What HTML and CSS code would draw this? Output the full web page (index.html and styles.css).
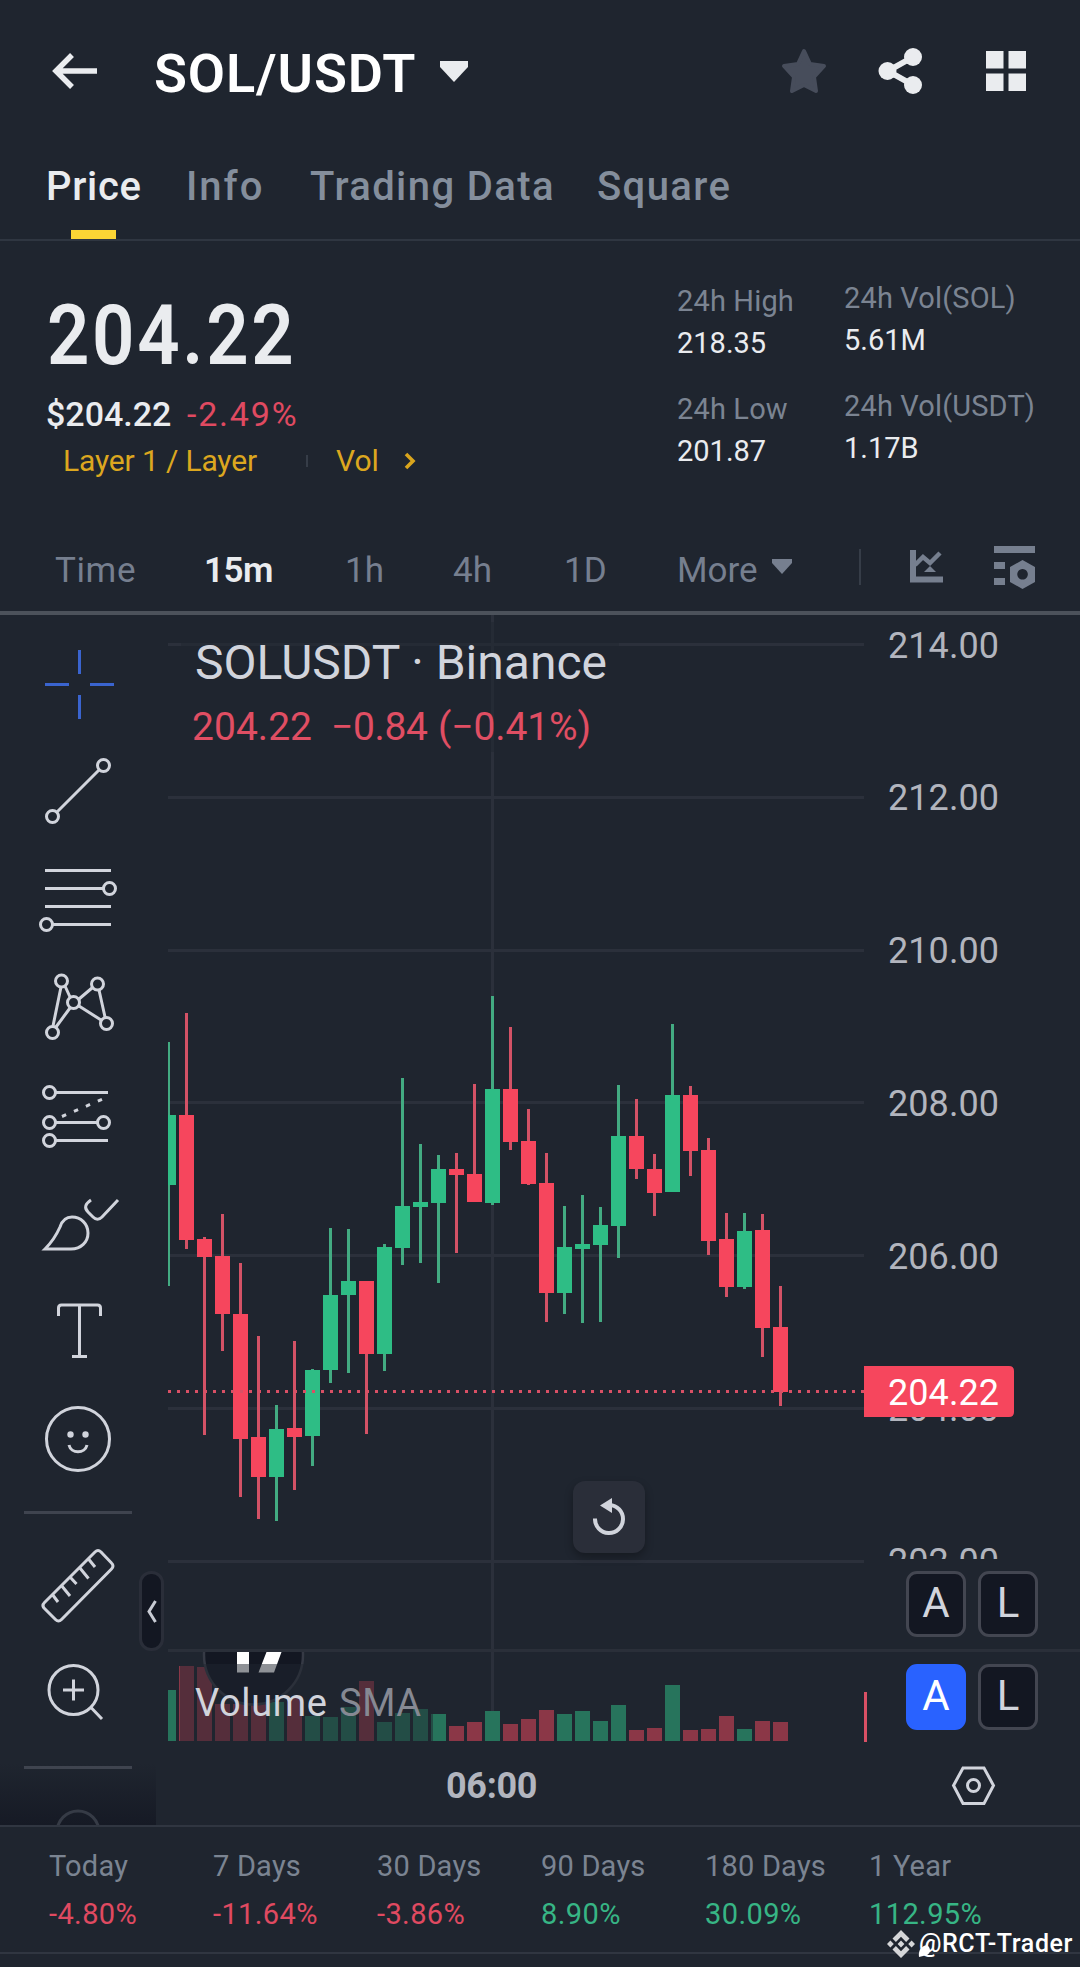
FILE: index.html
```html
<!DOCTYPE html>
<html lang="en">
<head>
    <meta charset="UTF-8">
    <meta name="viewport" content="width=device-width, initial-scale=1.0">
    <title>SOL/USDT</title>
    <link rel="stylesheet" href="styles.css">
</head>
<body>
    <header class="header">
        <svg class="back" width="48" height="40" viewBox="0 0 48 40"><path d="M46 20H6M21 4L5 20l16 16" fill="none" stroke="#eaecef" stroke-width="5.5"/></svg>
        <h1>SOL/USDT</h1>
        <svg class="caret" width="28" height="21" viewBox="0 0 28 21"><path d="M0 0h28v6L14 21 0 6z" fill="#eaecef"/></svg>
        <div class="actions">
            <svg width="46" height="46" viewBox="0 0 46 46"><path d="M23 3l6 13 14 2-10 11 2 14-12-6-12 6 2-14L3 18l14-2z" fill="#474d5b" stroke="#474d5b" stroke-width="4" stroke-linejoin="round"/></svg>
            <svg width="44" height="46" viewBox="0 0 44 46"><path d="M35 9L10 23l25 14" fill="none" stroke="#eaecef" stroke-width="6"/><g fill="#eaecef"><circle cx="35" cy="9" r="9"/><circle cx="9.500" cy="23" r="9"/><circle cx="35" cy="37" r="9"/></g></svg>
            <svg width="40" height="40" viewBox="0 0 40 40"><path d="M0 0h17.500v17.500H0zM22.500 0H40v17.500H22.500zM0 22.500h17.500V40H0zM22.500 22.500H40V40H22.500z" fill="#eaecef"/></svg>
        </div>
    </header>

    <nav class="tabs">
        <a class="tab active">Price</a>
        <a class="tab tab-info">Info</a>
        <a class="tab tab-trading">Trading Data</a>
        <a class="tab">Square</a>
    </nav>

    <section class="quote">
        <div class="quote-main">
            <div class="last-price">204.22</div>
            <div class="sub-price"><span class="fiat">$204.22</span><span class="change down">-2.49%</span></div>
            <div class="tags">
                <span class="tag-layer">Layer 1 / Layer</span>
                <span class="tag-divider"></span>
                <span>Vol</span>
                <svg width="12" height="18" viewBox="0 0 12 18"><path d="M2 2l7 7-7 7" fill="none" stroke="#d9a51d" stroke-width="3.600"/></svg>
            </div>
        </div>
        <div class="stats high-low">
            <div class="label">24h High</div>
            <div class="value">218.35</div>
            <div class="label second">24h Low</div>
            <div class="value">201.87</div>
        </div>
        <div class="stats volumes">
            <div class="label">24h Vol(SOL)</div>
            <div class="value">5.61M</div>
            <div class="label second">24h Vol(USDT)</div>
            <div class="value">1.17B</div>
        </div>
    </section>

    <nav class="intervals">
        <span class="iv-time">Time</span>
        <span class="iv-15 active">15m</span>
        <span class="iv-1h">1h</span>
        <span class="iv-4h">4h</span>
        <span class="iv-1d">1D</span>
        <span class="iv-more">More</span>
        <svg class="iv-caret" width="20" height="15" viewBox="0 0 20 15"><path d="M0 0h20v4L10 15 0 4z" fill="#767f8f"/></svg>
        <i class="iv-divider"></i>
        <svg class="iv-chart" width="33" height="33" viewBox="0 0 33 33"><path d="M3 0v29.500h30" fill="none" stroke="#767f8f" stroke-width="6"/><path d="M5 15l8-8 7 6L30 3" fill="none" stroke="#767f8f" stroke-width="4.500"/><path d="M14 22l6-6 6 6z" fill="#767f8f"/></svg>
        <svg class="iv-settings" width="41" height="43" viewBox="0 0 41 43"><path d="M0 0h41v7H0zM0 16h11v7H0zM0 32h11v7H0z" fill="#767f8f"/><path fill-rule="evenodd" d="M28.500 14L41 21v15l-12.500 7L16 36V21zM28.500 23a5.300 5.300 0 1 0 .1 0z" fill="#767f8f"/></svg>
    </nav>

    <main class="chart">
        <aside class="tools">
            <svg class="tool cross" viewBox="0 0 156 108"><path d="M79.500 20v24M79.500 65v24M45 54.500h24M90 54.500h24"/></svg>
            <svg class="tool" viewBox="0 0 156 108"><path d="M57 74l42-42"/><circle cx="103.500" cy="27.500" r="6"/><circle cx="52.500" cy="78.500" r="6"/></svg>
            <svg class="tool" viewBox="0 0 156 108"><path d="M45 24.500h66M45 42.500h58M45 60.500h66M53 78.500h58"/><circle cx="109.500" cy="42.500" r="6"/><circle cx="46.500" cy="78.500" r="6"/></svg>
            <svg class="tool" viewBox="0 0 156 108"><path d="M61 33l-8 39M65 32l5 11M56 73l14-19M79 45l13-11M99 36l6 27M79 52l22 14"/><circle cx="61.500" cy="27" r="6"/><circle cx="97.500" cy="30" r="6"/><circle cx="73.500" cy="48.500" r="6"/><circle cx="52.500" cy="78.500" r="6"/><circle cx="106.500" cy="69.500" r="6"/></svg>
            <svg class="tool" viewBox="0 0 156 108"><path d="M56 30.500h52M56 60.500h41M56 78.500h52"/><path d="M62 54.500l42-18" stroke-dasharray="4.500 8.500"/><circle cx="49.500" cy="30.500" r="6"/><circle cx="49.500" cy="60.500" r="6"/><circle cx="103.500" cy="60.500" r="6"/><circle cx="49.500" cy="78.500" r="6"/></svg>
            <svg class="tool" viewBox="0 0 156 108"><path d="M45 79c8-8 11-13 15-22 2-6 6-10 12-10 9 0 16 7 16 16s-7 16-17 16z"/><path d="M91 30c-6 4-7 8-3 12l5 5c3 3 6 3 9 0l16-17"/></svg>
            <svg class="tool" viewBox="0 0 156 108"><path d="M58.500 38v-8q0-3 3-3h36q3 0 3 3v8M79.500 27v51M72 78.500h15"/></svg>
            <svg class="tool" viewBox="0 0 156 108"><circle cx="78" cy="53" r="31.500"/><path d="M69 59c2 9 16 9 18 0"/><g class="solid"><circle cx="70.500" cy="48.500" r="3.200"/><circle cx="85.500" cy="48.500" r="3.200"/></g></svg>
            <hr>
            <svg class="tool ruler" viewBox="0 0 156 108"><path d="M95 20q3-3 6 0l10.500 11q3 3 0 6L61.500 87.500q-3 3-6 0L44.500 76.500q-3-3 0-6z"/><path d="M52 62l6 8M61 53l9 11M70 45l6.500 7M79.500 35.500l9 11M88.500 27l6.500 8"/></svg>
            <svg class="tool" viewBox="0 0 156 108"><circle cx="73.500" cy="50" r="24.500"/><path d="M63 50h21M73.500 39.500v21M91 67.500l11 11.500"/></svg>
            <div class="tools-fade">
                <hr>
                <svg class="magnet" viewBox="0 0 156 40"><path d="M57 45a21 21 0 0 1 42 0"/></svg>
            </div>
            <button class="collapse"><svg width="10" height="23" viewBox="0 0 10 23"><path d="M8.500 1L2 11.500 8.500 22" fill="none" stroke="#c8cbd4" stroke-width="3"/></svg></button>
        </aside>

        <svg class="plot" id="plot" width="912" height="1210" viewBox="168 615 912 1210">
            <g id="grid" class="grid"></g>
            <rect x="181" y="622" width="438" height="130" class="veil"/>
            <g id="candles"></g>
            <path d="M168 1391.500h696" stroke="#d95065" stroke-width="3" stroke-dasharray="3 6"/>
            <rect x="168" y="1649" width="912" height="3" fill="#2a2f39"/>

            <text class="title" x="195" y="679" textLength="412">SOLUSDT · Binance</text>
            <text class="ohlc" x="192" y="740" textLength="120">204.22</text>
            <text class="ohlc" x="331" y="740" textLength="97">−0.84</text>
            <text class="ohlc" x="438" y="740" textLength="153">(−0.41%)</text>

            <svg x="864" y="615" width="216" height="944" viewBox="864 615 216 944">
                <g id="axis" class="axis"></g>
            </svg>
            <path d="M864 1366h145q5 0 5 5v41q0 5-5 5H864z" fill="#f6465d"/>
            <text class="axis current" x="888" y="1404.500" textLength="111">204.22</text>

            <g id="volume"></g>
            <svg x="190" y="1652" width="130" height="60" viewBox="190 1652 130 60">
                <circle cx="253.500" cy="1655" r="49.500" fill="#131722" stroke="#363a45" stroke-width="2.500"/>
                <path d="M237 1652h12v20.500h-12zM266.500 1652h15l-7.500 20.500h-15.500z" fill="#fff"/>
            </svg>
            <rect x="180" y="1664" width="253" height="78" class="veil"/>
            <text class="vol" x="195" y="1716" textLength="132">Volume</text>
            <text class="vol dim" x="339" y="1716" textLength="82">SMA</text>
            <rect x="864" y="1692" width="3" height="50" fill="#d95065"/>

            <text class="time" x="446" y="1798" textLength="91.500">06:00</text>
            <path d="M963 1768h21l9.500 17.500-9.500 18h-21l-9.500-18z" fill="none" stroke="#d1d4dc" stroke-width="3"/>
            <circle cx="973.500" cy="1785.500" r="6" fill="none" stroke="#d1d4dc" stroke-width="3"/>
        </svg>

        <button class="reset"><svg width="32" height="40" viewBox="0 0 32 40"><path d="M2 21.500a14 14 0 1 0 14.500-13.500" fill="none" stroke="#d1d4dc" stroke-width="4"/><path d="M7 8.500L19 1v15z" fill="#d1d4dc"/></svg></button>
        <div class="scale-buttons">
            <button>A</button><button>L</button>
            <button class="on">A</button><button>L</button>
        </div>
    </main>

    <section class="performance">
        <div><span>Today</span><b class="down">-4.80%</b></div>
        <div><span>7 Days</span><b class="down">-11.64%</b></div>
        <div><span>30 Days</span><b class="down">-3.86%</b></div>
        <div><span>90 Days</span><b class="up">8.90%</b></div>
        <div><span>180 Days</span><b class="up">30.09%</b></div>
        <div><span>1 Year</span><b class="up">112.95%</b></div>
    </section>

    <div class="credit">
        <svg width="28" height="28" viewBox="0 0 28 28"><g fill="#d5d6d8"><path d="M14 0l8.500 8.500-3.400 3.400L14 6.800l-5.100 5.100-3.400-3.400zM14 28l8.500-8.500-3.400-3.400L14 21.200l-5.100-5.100-3.400 3.400zM14 10.600l3.400 3.400-3.400 3.400-3.400-3.400zM3.400 10.600L6.800 14l-3.400 3.400L0 14zM24.600 10.600L28 14l-3.400 3.400-3.400-3.400z"/></g><path d="M32 27c-1-6 2-11 8-12 4 3 4 8 0 10z" fill="#fff"/></svg>
        <span>@RCT-Trader</span>
    </div>

    <script src="script.js"></script>
</body>
</html>
```

FILE: styles.css
```css
body {
    margin: 0;
    width: 1080px;
    height: 1967px;
    overflow: hidden;
    position: relative;
    background-color: #1f252f;
    color: #eaecef;
    font-family: Roboto, sans-serif;
    white-space: nowrap;
}
svg {
    display: block;
    flex: none;
}
button {
    padding: 0;
    font-family: inherit;
    box-sizing: border-box;
}
.up {
    color: #37b585;
}
.down {
    color: #e04a61;
}

/* header */
.header {
    display: flex;
    align-items: center;
    height: 141px;
    padding: 3px 54px 0 51px;
}
.back {
    margin-top: -5px;
}
h1 {
    width: 263px;
    margin: 0 23px 0 55px;
    font-size: 54px;
    font-weight: 600;
    letter-spacing: 0.9px;
    color: #fff;
}
.caret {
    margin-top: -4px;
}
.actions {
    display: flex;
    align-items: center;
    margin: -6px 0 0 auto;
}
.actions svg:nth-child(2) {
    margin: 0 64px 0 51px;
}

/* tabs */
.tabs {
    display: flex;
    height: 95px;
    padding-left: 46px;
    border-bottom: 2px solid #2f3641;
}
.tab {
    font-size: 40px;
    font-weight: 500;
    line-height: 85px;
    letter-spacing: 1.4px;
    color: #848e9c;
}
.tab.active {
    width: 95px;
    margin-right: 45px;
    letter-spacing: 0.7px;
    color: #eaecef;
}
.tab.active::after {
    content: "";
    display: block;
    width: 45px;
    height: 9px;
    margin: 1px auto 0;
    background-color: #fcd535;
}
.tab-info {
    width: 124px;
    letter-spacing: 2px;
}
.tab-trading {
    width: 287px;
}

/* quote */
.quote {
    display: flex;
    height: 289px;
}
.quote-main {
    width: 677px;
    padding-top: 53px;
}
.last-price {
    margin-left: 47px;
    font-size: 84px;
    font-weight: 600;
    line-height: 84px;
    letter-spacing: 3px;
    transform: scaleX(0.885);
    transform-origin: left;
}
.sub-price {
    display: flex;
    padding: 13px 0 0 46px;
    font-size: 34px;
    line-height: 46px;
}
.fiat {
    width: 141px;
    font-weight: 500;
}
.change {
    letter-spacing: 1.8px;
}
.tags {
    display: flex;
    align-items: center;
    padding: 1px 0 0 63px;
    font-size: 30px;
    line-height: 46px;
    color: #dca71f;
}
.tag-layer {
    width: 243px;
    letter-spacing: -0.15px;
}
.tag-divider {
    width: 2px;
    height: 12px;
    margin-right: 28px;
    background-color: #363d48;
}
.tags svg {
    margin-left: 25px;
}
.stats {
    font-size: 29px;
    line-height: 42px;
}
.high-low {
    width: 167px;
    padding-top: 39px;
}
.volumes {
    padding-top: 36px;
}
.label {
    letter-spacing: 0.15px;
    color: #7b8492;
}
.second {
    margin-top: 24px;
}

/* intervals */
.intervals {
    display: flex;
    align-items: center;
    height: 81px;
    padding-left: 55px;
    border-bottom: 4px solid #4c525b;
    font-size: 35px;
    color: #767f8f;
}
.intervals .active {
    font-weight: 600;
    color: #eaecef;
}
.iv-time {
    width: 149px;
    letter-spacing: 0.6px;
}
.iv-15 {
    width: 141px;
    letter-spacing: -0.5px;
}
.iv-1h {
    width: 108px;
}
.iv-4h {
    width: 111px;
}
.iv-1d {
    width: 113px;
}
.iv-more {
    width: 95px;
}
.iv-caret {
    margin-top: -8px;
}
.iv-divider {
    width: 2px;
    height: 36px;
    margin: -8px 49px 0 67px;
    background-color: #363d48;
}
.iv-chart {
    margin-top: -8px;
}
.iv-settings {
    margin: -6px 0 0 51px;
}

/* chart */
.chart {
    position: relative;
    display: flex;
    height: 1210px;
}
.tools {
    position: relative;
    width: 168px;
    padding-top: 15px;
    box-sizing: border-box;
    height: 1210px;
    overflow: hidden;
}
.tool {
    width: 156px;
    height: 108px;
    fill: none;
    stroke: #d1d4dc;
    stroke-width: 3;
}
.cross {
    stroke: #3a64cf;
}
.solid {
    fill: #d1d4dc;
    stroke: none;
}
hr {
    width: 108px;
    height: 3px;
    margin: 17px 0 18px 24px;
    border: 0;
    background-color: #3f444f;
}
.tools-fade {
    width: 156px;
    height: 77px;
    padding-top: 18px;
    box-sizing: border-box;
    background: linear-gradient(rgba(22, 26, 37, 0) 20%, #161a25);
}
.tools-fade hr {
    margin: 0 0 0 24px;
}
.magnet {
    width: 156px;
    height: 40px;
    padding-top: 18px;
    fill: none;
    stroke: #363b46;
    stroke-width: 3;
}
.collapse {
    position: absolute;
    left: 139px;
    top: 956px;
    width: 25px;
    height: 80px;
    padding-left: 5px;
    border: 3px solid #2a2e39;
    border-radius: 12px;
    background-color: #131722;
}
.grid rect {
    fill: #2b303b;
}
.veil {
    fill: #1f252f;
    fill-opacity: 0.5;
}
.title {
    font-size: 48px;
    fill: #d1d4dc;
}
.ohlc {
    font-size: 39px;
    fill: #e04e63;
}
.axis {
    font-size: 36px;
    fill: #b2b5be;
}
.current {
    fill: #fff;
}
.vol {
    font-size: 38px;
    fill: #d1d4dc;
}
.vol.dim {
    fill: #868993;
}
.time {
    font-size: 36px;
    font-weight: 700;
    fill: #b2b5be;
}
.green {
    fill: #2ebd85;
}
.red {
    fill: #f6465d;
}
.wick.green {
    fill: #43ab82;
}
.wick.red {
    fill: #d35266;
}
.bar.green {
    fill: #27745c;
}
.bar.red {
    fill: #8b3747;
}
.reset {
    position: absolute;
    left: 573px;
    top: 866px;
    width: 72px;
    height: 72px;
    padding-left: 20px;
    border: 0;
    border-radius: 12px;
    background-color: #2a2e39;
    box-shadow: 0 4px 8px rgba(0, 0, 0, 0.3);
}
.scale-buttons {
    position: absolute;
    left: 906px;
    top: 956px;
    display: grid;
    grid-template-columns: 60px 60px;
    gap: 27px 12px;
}
.scale-buttons button {
    height: 66px;
    padding-bottom: 2px;
    border: 3px solid #434651;
    border-radius: 11px;
    background-color: #131722;
    color: #d1d4dc;
    font-size: 42px;
    line-height: 58px;
}
.scale-buttons .on {
    border-color: #2962ff;
    background-color: #2962ff;
    color: #fff;
}

/* performance */
.performance {
    display: grid;
    grid-template-columns: repeat(6, 164px);
    padding: 15px 0 14px 49px;
    border-top: 2px solid #303641;
    border-bottom: 2px solid #303641;
    font-size: 29px;
    line-height: 48px;
}
.performance span {
    display: block;
    letter-spacing: 0.2px;
    color: #7b8492;
}
.performance b {
    font-weight: 400;
    letter-spacing: 0.4px;
}
.credit {
    position: absolute;
    left: 887px;
    top: 1930px;
    display: flex;
    align-items: center;
    gap: 4px;
    font-size: 25px;
    line-height: 28px;
    font-weight: 500;
    letter-spacing: 0.6px;
    color: #fff;
}
.credit svg {
    overflow: visible;
}
```

FILE: script.js
```js
// direction, high, body top, body bottom, low, volume top
const candles = [
    ['g', 1042, 1115, 1185, 1286, 1690],
    ['r', 1013, 1115, 1240, 1249, 1666],
    ['r', 1237, 1239, 1257, 1435, 1667],
    ['r', 1214, 1256, 1314, 1351, 1704],
    ['r', 1263, 1314, 1439, 1497, 1704],
    ['r', 1336, 1437, 1477, 1519, 1704],
    ['g', 1405, 1429, 1477, 1521, 1702],
    ['r', 1341, 1428, 1437, 1490, 1698],
    ['g', 1369, 1370, 1436, 1466, 1716],
    ['g', 1228, 1295, 1370, 1383, 1717],
    ['g', 1229, 1281, 1295, 1373, 1707],
    ['r', 1281, 1281, 1354, 1434, 1681],
    ['g', 1244, 1247, 1354, 1371, 1722],
    ['g', 1078, 1206, 1248, 1265, 1713],
    ['g', 1144, 1202, 1207, 1263, 1709],
    ['g', 1155, 1169, 1203, 1283, 1714],
    ['r', 1153, 1169, 1175, 1253, 1726],
    ['r', 1084, 1174, 1202, 1202, 1722],
    ['g', 996, 1089, 1203, 1205, 1711],
    ['r', 1027, 1089, 1142, 1150, 1724],
    ['r', 1109, 1141, 1184, 1185, 1719],
    ['r', 1153, 1183, 1293, 1322, 1710],
    ['g', 1206, 1247, 1293, 1314, 1714],
    ['g', 1195, 1244, 1249, 1323, 1711],
    ['g', 1207, 1225, 1245, 1322, 1721],
    ['g', 1085, 1136, 1226, 1258, 1705],
    ['r', 1099, 1136, 1169, 1179, 1730],
    ['r', 1154, 1169, 1193, 1216, 1728],
    ['g', 1024, 1095, 1192, 1192, 1685],
    ['r', 1086, 1095, 1151, 1176, 1730],
    ['r', 1138, 1150, 1241, 1255, 1729],
    ['r', 1213, 1239, 1287, 1297, 1716],
    ['g', 1213, 1231, 1287, 1289, 1729],
    ['r', 1214, 1230, 1328, 1357, 1721],
    ['r', 1286, 1327, 1392, 1406, 1722]
];

const LEFT = 168;
const VOLUME_BASE = 1741;

function rect(x, y, w, h, cls) {
    // clip everything to the left edge of the pane
    const x0 = Math.max(x, LEFT);
    return `<rect class="${cls}" x="${x0}" y="${y}" width="${x + w - x0}" height="${h}" shape-rendering="crispEdges"/>`;
}

let body = '';
let volume = '';
candles.forEach(([dir, high, top, bottom, low, vol], i) => {
    const x = 161 + i * 18;
    const color = dir === 'g' ? 'green' : 'red';
    body += rect(x + 6, high, 3, low - high, 'wick ' + color);
    body += rect(x, top, 15, bottom - top, color);
    volume += rect(x, vol, 15, VOLUME_BASE - vol, 'bar ' + color);
});
document.getElementById('candles').innerHTML = body;
document.getElementById('volume').innerHTML = volume;

// horizontal grid lines and price labels
let grid = rect(491, 615, 3, 1126, '');
let axis = '';
for (let i = 0; i < 7; i++) {
    const y = 644.5 + i * 152.75;
    grid += rect(LEFT, Math.round(y - 1.5), 696, 3, '');
    axis += `<text x="888" y="${y + 13}" textLength="111">${214 - i * 2}.00</text>`;
}
document.getElementById('grid').innerHTML = grid;
document.getElementById('axis').innerHTML = axis;
```
